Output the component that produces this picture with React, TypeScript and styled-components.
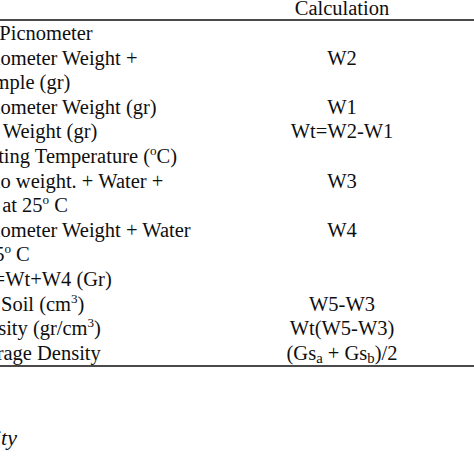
import styled, { createGlobalStyle } from "styled-components";

const GlobalStyle = createGlobalStyle`
  html, body {
    margin: 0;
    padding: 0;
    background: #ffffff;
    overflow: hidden;
  }
  body {
    font-family: "Liberation Serif", "Times New Roman", serif;
    color: #0f0f0f;
  }
`;

// the picture is a crop of a printed page, so the sheet starts a little outside the window
export const Sheet = styled.div`
  margin: -3px 0 0 -36px;
  width: 540px;
`;

export const DataTable = styled.table`
  border-collapse: collapse;
  table-layout: fixed;
  width: 521px;
  font-size: 20.5px;
`;

export const HeadCell = styled.th`
  padding: 0;
  font-weight: 400;
  line-height: 22px;
  text-align: center;
  border-bottom: 2px solid #4a4a4a;
`;

export const Row = styled.tr`
  &:last-child td {
    border-bottom: 2px solid #4a4a4a;
  }
`;

export const Cell = styled.td<{ $center?: boolean; $indent?: number; $hang?: number }>`
  padding: 0 0 0 ${(p) => p.$indent ?? 0}px;
  text-indent: ${(p) => -(p.$hang ?? 0)}px;
  vertical-align: top;
  line-height: 24.6px;
  text-align: ${(p) => (p.$center ? "center" : "left")};

  sup {
    font-size: 0.64em;
    line-height: 0;
    vertical-align: super;
  }
  sub {
    font-size: 0.72em;
    line-height: 0;
    vertical-align: -0.18em;
  }
`;

export const Caption = styled.div`
  display: flex;
  justify-content: flex-end;
  width: 53px;
  margin-top: 58px;
  font-style: italic;
  font-size: 22px;
  line-height: 26px;
  white-space: nowrap;
`;

type Item = { label: React.ReactNode; calc?: React.ReactNode; indent?: number; hang?: number };

const items: Item[] = [
  { label: "No. Picnometer" },
  { label: "Picnometer Weight + Sample (gr)", calc: "W2", indent: 9, hang: 9 },
  { label: "Picnometer Weight (gr)", calc: "W1" },
  { label: "Soil Weight (gr)", calc: "Wt=W2-W1", indent: 1 },
  {
    label: (
      <>
        Testing Temperature (<sup>o</sup>C)
      </>
    ),
    indent: 6,
  },
  {
    label: (
      <>
        Picno weight. + Water + Soil at 25<sup>o</sup> C
      </>
    ),
    calc: "W3",
  },
  {
    label: (
      <>
        Picnometer Weight + Water at 25<sup>o</sup> C
      </>
    ),
    calc: "W4",
  },
  { label: "W5=Wt+W4 (Gr)" },
  {
    label: (
      <>
        Dry Soil (cm<sup>3</sup>)
      </>
    ),
    calc: "W5-W3",
  },
  {
    label: (
      <>
        Density (gr/cm<sup>3</sup>)
      </>
    ),
    calc: "Wt(W5-W3)",
  },
  {
    label: "Average Density",
    calc: (
      <>
        (Gs<sub>a</sub> + Gs<sub>b</sub>)/2
      </>
    ),
  },
];

const App = () => {
  return (
    <Sheet>
      <GlobalStyle />
      <DataTable>
        <colgroup>
          <col style={{ width: 235 }} />
          <col style={{ width: 286 }} />
        </colgroup>
        <thead>
          <tr>
            <HeadCell />
            <HeadCell>Calculation</HeadCell>
          </tr>
        </thead>
        <tbody>
          {items.map((item, i) => (
            <Row key={i}>
              <Cell $indent={item.indent} $hang={item.hang}>
                {item.label}
              </Cell>
              <Cell $center>{item.calc}</Cell>
            </Row>
          ))}
        </tbody>
      </DataTable>
      <Caption>
        <span>Specific Gravity</span>
      </Caption>
    </Sheet>
  );
};

export default App;
